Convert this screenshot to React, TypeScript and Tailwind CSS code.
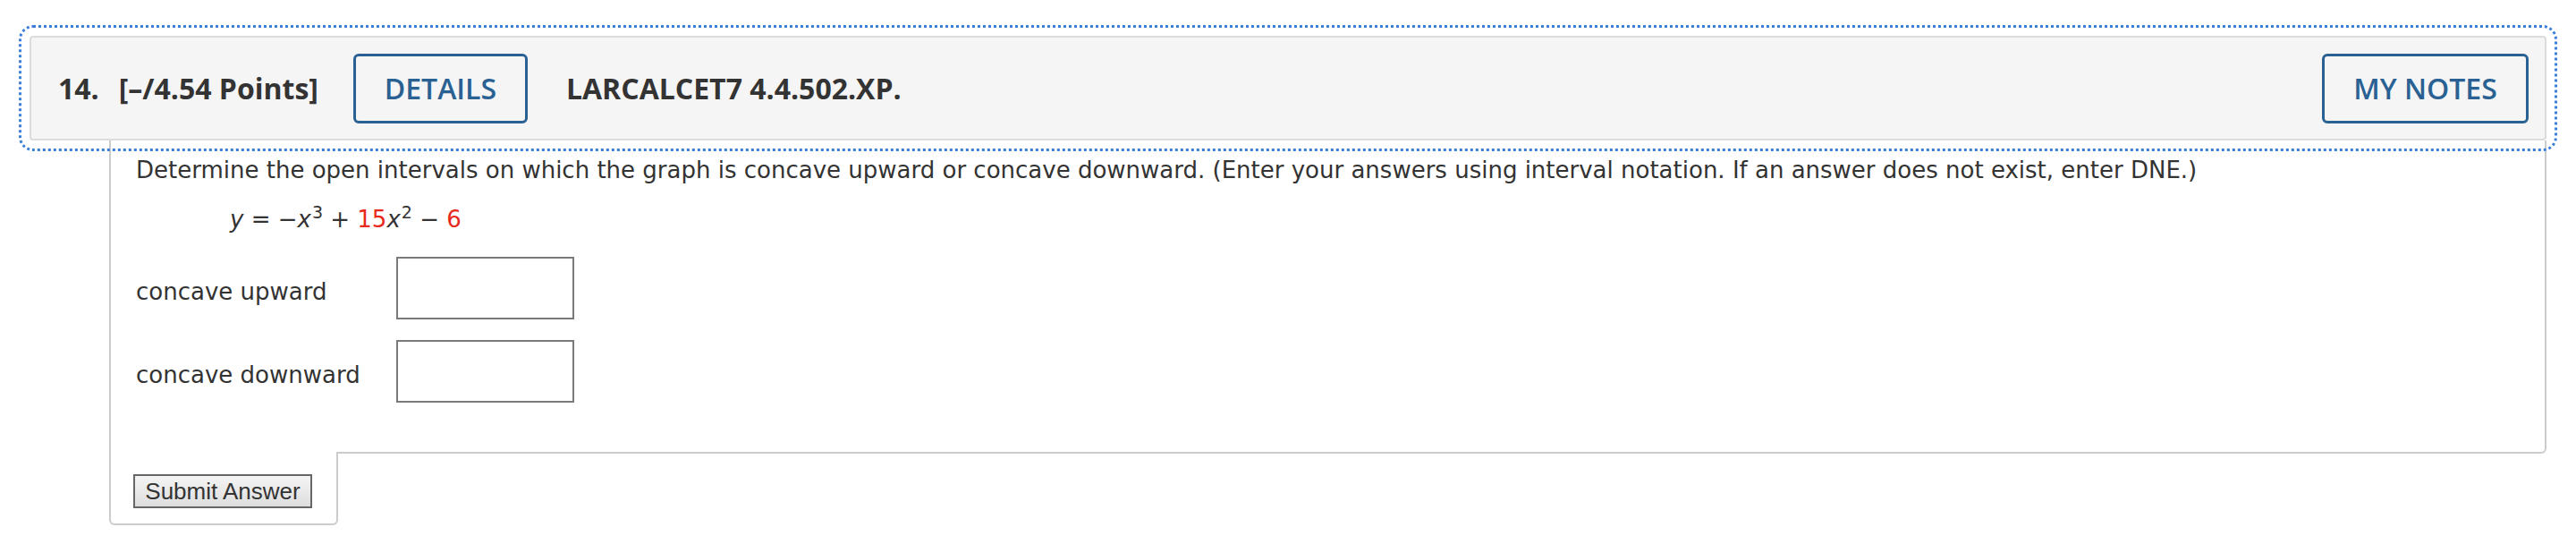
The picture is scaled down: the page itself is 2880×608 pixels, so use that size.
import React from "react";

export default function App() {
  return (
    <div className="min-h-[608px] bg-white px-[33px] pt-[40px]">
      {/* Header */}
      <div className="relative z-10 flex h-[117px] items-center rounded-[4px] border-2 border-[#dcdcdc] bg-[#f5f5f5] pl-[30px] pr-[18px] outline-3 outline-offset-[9px] outline-dotted outline-[#3a7fd8] [font-family:'Open_Sans',sans-serif] text-[#333]">
        <span className="text-[32px] font-bold">14.</span>
        <span className="ml-[22px] text-[32px] font-bold">[–/4.54 Points]</span>
        <button className="ml-[39px] flex h-[78px] w-[195px] items-center justify-center rounded-[6px] border-[3px] border-[#2a6193] bg-transparent text-[32px] font-semibold text-[#2a6193]">
          DETAILS
        </button>
        <span className="ml-[43px] text-[32px] font-bold">LARCALCET7 4.4.502.XP.</span>
        <button className="ml-auto flex h-[78px] w-[231px] items-center justify-center rounded-[6px] border-[3px] border-[#2a6193] bg-transparent text-[32px] font-semibold text-[#2a6193]">
          MY NOTES
        </button>
      </div>

      {/* Body */}
      <div className="ml-[89px] [font-family:'DejaVu_Sans',Verdana,sans-serif] text-[26px] leading-[36px] text-[#333]">
        <div className="rounded-br-[6px] border-x-2 border-b-2 border-[#cccccc] pb-[55px] pl-[28px] pt-[15px]">
          <div>
            Determine the open intervals on which the graph is concave upward or concave downward. (Enter your answers using interval notation. If an answer does not exist, enter DNE.)
          </div>
          <div className="mt-[19px] pl-[105px]">
            <i>y</i>
            {" = −"}
            <i>x</i>
            <span className="inline-block pl-[1px] align-[10px] text-[19px] leading-none">3</span>
            {" + "}
            <span className="text-[#e8291c]">15</span>
            <i>x</i>
            <span className="inline-block pl-[1px] align-[10px] text-[19px] leading-none">2</span>
            {" − "}
            <span className="text-[#e8291c]">6</span>
          </div>
          <div className="mt-[24px] flex flex-col gap-[23px]">
            <div className="flex items-center">
              <span className="mt-[8px] w-[291px]">concave upward</span>
              <div className="h-[70px] w-[199px] border-2 border-[#7a7a7a] bg-white" />
            </div>
            <div className="flex items-center">
              <span className="mt-[8px] w-[291px]">concave downward</span>
              <div className="h-[70px] w-[199px] border-2 border-[#7a7a7a] bg-white" />
            </div>
          </div>
        </div>
        <div className="relative -mt-[2px] w-[256px] rounded-b-[6px] border-x-2 border-b-2 border-[#cccccc] bg-white pb-[17px] pl-[25px] pt-[25px]">
          <button className="flex h-[38px] w-[200px] items-center justify-center border-2 border-[#666] bg-gradient-to-b from-[#f4f4f4] to-[#dedede] [font-family:'Liberation_Sans',Arial,sans-serif] text-[26px] leading-none text-[#333]">
            Submit Answer
          </button>
        </div>
      </div>
    </div>
  );
}
